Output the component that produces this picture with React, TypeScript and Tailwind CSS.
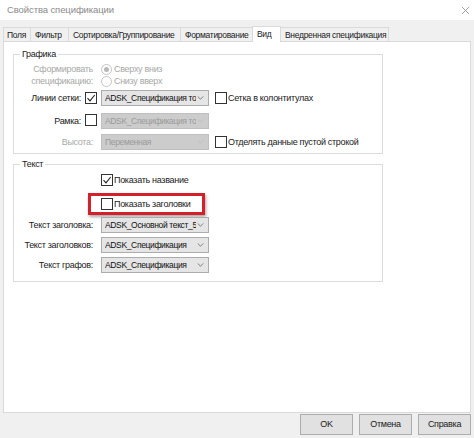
import React from 'react';

const font = { fontFamily: '"Liberation Sans", Arial, sans-serif' };

function Check({ checked }: { checked?: boolean }) {
  return (
    <span className="inline-flex w-[12px] h-[12px] shrink-0 items-center justify-center border border-[#333333] bg-white">
      {checked && (
        <svg viewBox="0 0 10 10" className="w-[10px] h-[10px]">
          <path d="M1.5 5.2 L4 7.8 L8.7 2" fill="none" stroke="#222" strokeWidth="1.1" />
        </svg>
      )}
    </span>
  );
}

function Radio({ checked }: { checked?: boolean }) {
  return (
    <span className="inline-flex w-[11px] h-[11px] shrink-0 items-center justify-center rounded-full border border-[#c4c4c4] bg-white">
      {checked && <span className="w-[5px] h-[5px] rounded-full bg-[#b8b8b8]" />}
    </span>
  );
}

function Chevron({ disabled }: { disabled?: boolean }) {
  return (
    <svg viewBox="0 0 8 5" className="w-[7px] h-[4px] shrink-0">
      <path d="M0.5 0.5 L4 4 L7.5 0.5" fill="none" stroke={disabled ? '#bdbdbd' : '#666'} strokeWidth="1" />
    </svg>
  );
}

function Select({ value, disabled }: { value: string; disabled?: boolean }) {
  return (
    <div
      className={`flex items-center w-[108px] h-[16px] border pl-[3px] pr-[4px] gap-[1px] ${
        disabled ? 'bg-[#cccccc] border-[#bfbfbf] text-[#9a9a9a]' : 'bg-[#e5e5e5] border-[#acacac] text-[#111]'
      }`}
    >
      <span className="flex-1 overflow-hidden whitespace-nowrap text-[8.5px] leading-[12px] tracking-[-0.35px]">{value}</span>
      <Chevron disabled={disabled} />
    </div>
  );
}

function Label({ children, muted, w = 'w-[79px]' }: { children: React.ReactNode; muted?: boolean; w?: string }) {
  return (
    <span className={`${w} shrink-0 text-right text-[9px] leading-none whitespace-nowrap ${muted ? 'text-[#a8a8a8]' : 'text-[#1a1a1a]'}`}>
      {children}
    </span>
  );
}

function Legend({ children }: { children: React.ReactNode }) {
  return (
    <div className="h-[11px] -mt-[6px] text-[9px] leading-[11px]">
      <span className="ml-[6px] px-[2px] bg-white">{children}</span>
    </div>
  );
}

export default function App() {
  const tabs = [
    { t: 'Поля', w: 'w-[28px]' },
    { t: 'Фильтр', w: 'w-[39px]' },
    { t: 'Сортировка/Группирование', w: 'w-[113px]' },
    { t: 'Форматирование', w: 'w-[73px]' },
    { t: 'Вид', w: 'w-[29px]' },
    { t: 'Внедренная спецификация', w: 'w-[109px]' },
  ];

  return (
    <div className="w-[474px] h-[438px] bg-[#f0f0f0] flex flex-col text-[#1a1a1a] tracking-[-0.3px]" style={font}>
      {/* Title bar */}
      <div className="h-[20px] bg-white flex items-center justify-between pl-[7px] pr-[4px] shrink-0">
        <span className="text-[9.5px] text-[#8a8a8a] tracking-[-0.1px]">Свойства спецификации</span>
        <svg viewBox="0 0 10 10" className="w-[9px] h-[9px]">
          <path d="M1 1 L9 9 M9 1 L1 9" stroke="#888" strokeWidth="0.9" />
        </svg>
      </div>

      {/* Tabs */}
      <div className="flex items-end h-[21px] pl-[3px] text-[8.5px] leading-none shrink-0">
        {tabs.map(({ t, w }) => {
          const active = t === 'Вид';
          return (
            <div
              key={t}
              className={`${w} border border-b-0 border-[#dadada] pl-[4px] first:pl-[3px] whitespace-nowrap overflow-hidden ${
                active ? 'bg-white h-[16px] pt-[3px] -mb-px -ml-px relative z-10' : 'bg-[#f0f0f0] h-[14px] pt-[3px] -ml-px first:ml-0'
              }`}
            >
              {t}
            </div>
          );
        })}
      </div>

      {/* Panel */}
      <div className="mx-[3px] w-[468px] h-[372px] bg-white border border-[#d9d9d9] pt-[12px] pl-[9px] shrink-0">
        {/* Графика */}
        <div className="w-[370px] h-[100px] border border-[#dcdcdc]">
          <Legend>Графика</Legend>
          <div className="flex mt-[3px]">
            <span className="w-[79px] shrink-0 text-right text-[9px] leading-[12px] text-[#a8a8a8]">
              Сформировать
              <br />
              спецификацию:
            </span>
            <div className="flex flex-col ml-[8px] text-[9px] leading-none text-[#a8a8a8]">
              <div className="flex items-center gap-[2px] h-[12px]">
                <Radio checked />
                <span>Сверху вниз</span>
              </div>
              <div className="flex items-center gap-[2px] h-[12px]">
                <Radio />
                <span>Снизу вверх</span>
              </div>
            </div>
          </div>

          <div className="flex items-center h-[16px] mt-[3px]">
            <Label w="w-[67px]">Линии сетки:</Label>
            <span className="ml-[4px]">
              <Check checked />
            </span>
            <span className="ml-[4px]">
              <Select value="ADSK_Спецификация тон" />
            </span>
            <span className="ml-[6px] flex items-center gap-[1px] text-[9px] leading-none">
              <Check />
              <span>Сетка в колонтитулах</span>
            </span>
          </div>

          <div className="flex items-center h-[16px] mt-[7px]">
            <Label w="w-[67px]">Рамка:</Label>
            <span className="ml-[4px]">
              <Check />
            </span>
            <span className="ml-[4px]">
              <Select value="ADSK_Спецификация тол" disabled />
            </span>
          </div>

          <div className="flex items-center h-[16px] mt-[5px]">
            <Label muted>Высота:</Label>
            <span className="ml-[8px]">
              <Select value="Переменная" disabled />
            </span>
            <span className="ml-[6px] flex items-center gap-[1px] text-[9px] leading-none">
              <Check />
              <span>Отделять данные пустой строкой</span>
            </span>
          </div>
        </div>

        {/* Текст */}
        <div className="w-[370px] h-[118px] mt-[10px] border border-[#dcdcdc]">
          <Legend>Текст</Legend>
          <div className="flex items-center gap-[1px] h-[12px] mt-[4px] ml-[87px] text-[9px] leading-none">
            <Check checked />
            <span>Показать название</span>
          </div>
          <div className="mt-[7px] ml-[74px] w-[117px] h-[22px] border-[3px] border-[#d4202a] flex items-center pl-[10px] gap-[1px] text-[9px] leading-none shadow-[1px_2px_3px_rgba(0,0,0,0.35)]">
            <Check />
            <span>Показать заголовки</span>
          </div>
          <div className="flex flex-col gap-[4px] mt-[2px]">
            <div className="flex items-center h-[16px]">
              <Label>Текст заголовка:</Label>
              <span className="ml-[8px]">
                <Select value="ADSK_Основной текст_5" />
              </span>
            </div>
            <div className="flex items-center h-[16px]">
              <Label>Текст заголовков:</Label>
              <span className="ml-[8px]">
                <Select value="ADSK_Спецификация" />
              </span>
            </div>
            <div className="flex items-center h-[16px]">
              <Label>Текст графов:</Label>
              <span className="ml-[8px]">
                <Select value="ADSK_Спецификация" />
              </span>
            </div>
          </div>
        </div>
      </div>

      {/* Footer */}
      <div className="flex justify-end gap-[6px] pr-[3px] pt-[1px]">
        {['OK', 'Отмена', 'Справка'].map((b) => (
          <button
            key={b}
            className="w-[53px] h-[21px] bg-[#e1e1e1] border border-[#adadad] text-[9px] leading-none text-[#1a1a1a]"
          >
            {b}
          </button>
        ))}
      </div>
    </div>
  );
}
